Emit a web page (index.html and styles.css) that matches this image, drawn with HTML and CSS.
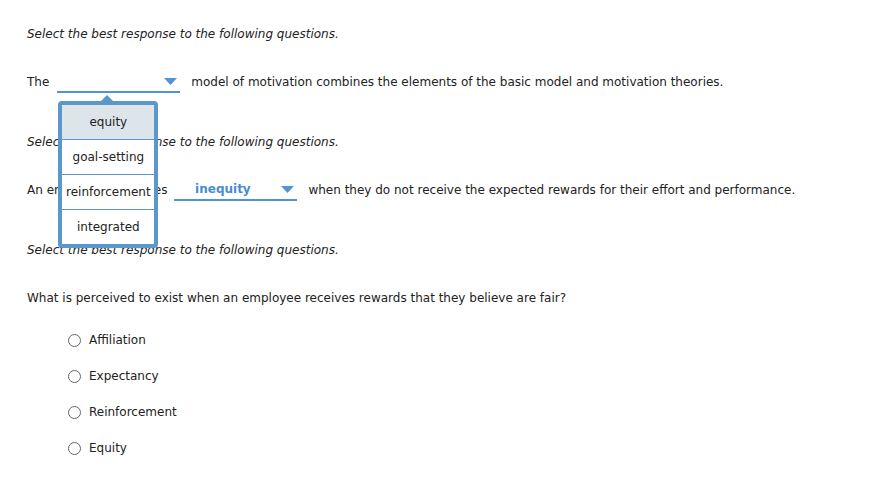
FILE: index.html
```html
<!DOCTYPE html>
<html>
<head>
<meta charset="utf-8">
<link rel="stylesheet" href="styles.css">
</head>
<body>
<div class="page">
  <p class="instr">Select the best response to the following questions.</p>
  <div class="q q1">
    <span>The</span>
    <span class="dd">
      <span class="dd-val"></span>
      <svg class="arrow" width="13" height="7" viewBox="0 0 13 7"><path d="M0 0H13L6.5 7Z" fill="#5294d1"/></svg>
      <div class="menu">
        <svg class="pointer" width="14" height="7" viewBox="0 0 14 7"><path d="M0 7L7 0L14 7Z" fill="#5b97c9"/></svg>
        <div class="opt sel">equity</div>
        <div class="opt">goal-setting</div>
        <div class="opt">reinforcement</div>
        <div class="opt">integrated</div>
      </div>
    </span>
    <span>model of motivation combines the elements of the basic model and motivation theories.</span>
  </div>

  <p class="instr">Select the best response to the following questions.</p>
  <div class="q q2">
    <span>An employee perceives</span>
    <span class="dd">
      <span class="dd-val chosen">inequity</span>
      <svg class="arrow" width="13" height="7" viewBox="0 0 13 7"><path d="M0 0H13L6.5 7Z" fill="#5294d1"/></svg>
    </span>
    <span>when they do not receive the expected rewards for their effort and performance.</span>
  </div>

  <p class="instr">Select the best response to the following questions.</p>
  <p class="q3">What is perceived to exist when an employee receives rewards that they believe are fair?</p>
  <ul class="opts">
    <li><span class="radio"></span>Affiliation</li>
    <li><span class="radio"></span>Expectancy</li>
    <li><span class="radio"></span>Reinforcement</li>
    <li><span class="radio"></span>Equity</li>
  </ul>
</div>
</body>
</html>
```
FILE: styles.css
```css
html, body {
  margin: 0;
  padding: 0;
  background: #fff;
}
body {
  font-family: "DejaVu Sans", Verdana, sans-serif;
  font-size: 12px;
  color: #222;
}
.page {
  padding: 25px 27px 0;
}
.instr {
  font-style: italic;
  margin: 0;
  height: 18px;
  line-height: 18px;
}
.q {
  display: flex;
  align-items: center;
  height: 18px;
  line-height: 18px;
}
.q1 {
  margin-top: 30px;
  margin-bottom: 42px;
}
.q2 {
  margin-top: 30px;
  margin-bottom: 42px;
}
.dd {
  position: relative;
  display: inline-flex;
  align-items: center;
  justify-content: space-between;
  width: 123px;
  height: 19px;
  margin: 0 11px 0 7px;
  border-bottom: 2px solid #5294d1;
}
.q1 .dd { margin-left: 8px; }
.dd-val {
  flex: 1;
  text-align: center;
  padding-right: 10px;
}
.dd-val.chosen {
  color: #4a8bcd;
  font-weight: bold;
}
.arrow {
  margin-right: 3px;
}
.menu {
  position: absolute;
  left: 1px;
  top: 29px;
  width: 92px;
  border: 4px solid #5b97c9;
  border-radius: 4px;
  background: #fff;
  z-index: 5;
}
.pointer {
  position: absolute;
  left: 38px;
  top: -10px;
}
.opt {
  height: 34px;
  line-height: 34px;
  text-align: center;
  border-top: 1px solid #5b97c9;
  color: #222;
}
.opt:first-of-type { border-top: 0; }
.opt.sel { background: #dde5ea; }
.q3 {
  margin: 30px 0 0;
  height: 18px;
  line-height: 18px;
}
.opts {
  list-style: none;
  margin: 15px 0 0;
  padding: 0 0 0 41px;
}
.opts li {
  display: flex;
  align-items: center;
  height: 36px;
}
.radio {
  width: 11px;
  height: 11px;
  border: 1px solid #666;
  border-radius: 50%;
  margin-right: 8px;
}
```
